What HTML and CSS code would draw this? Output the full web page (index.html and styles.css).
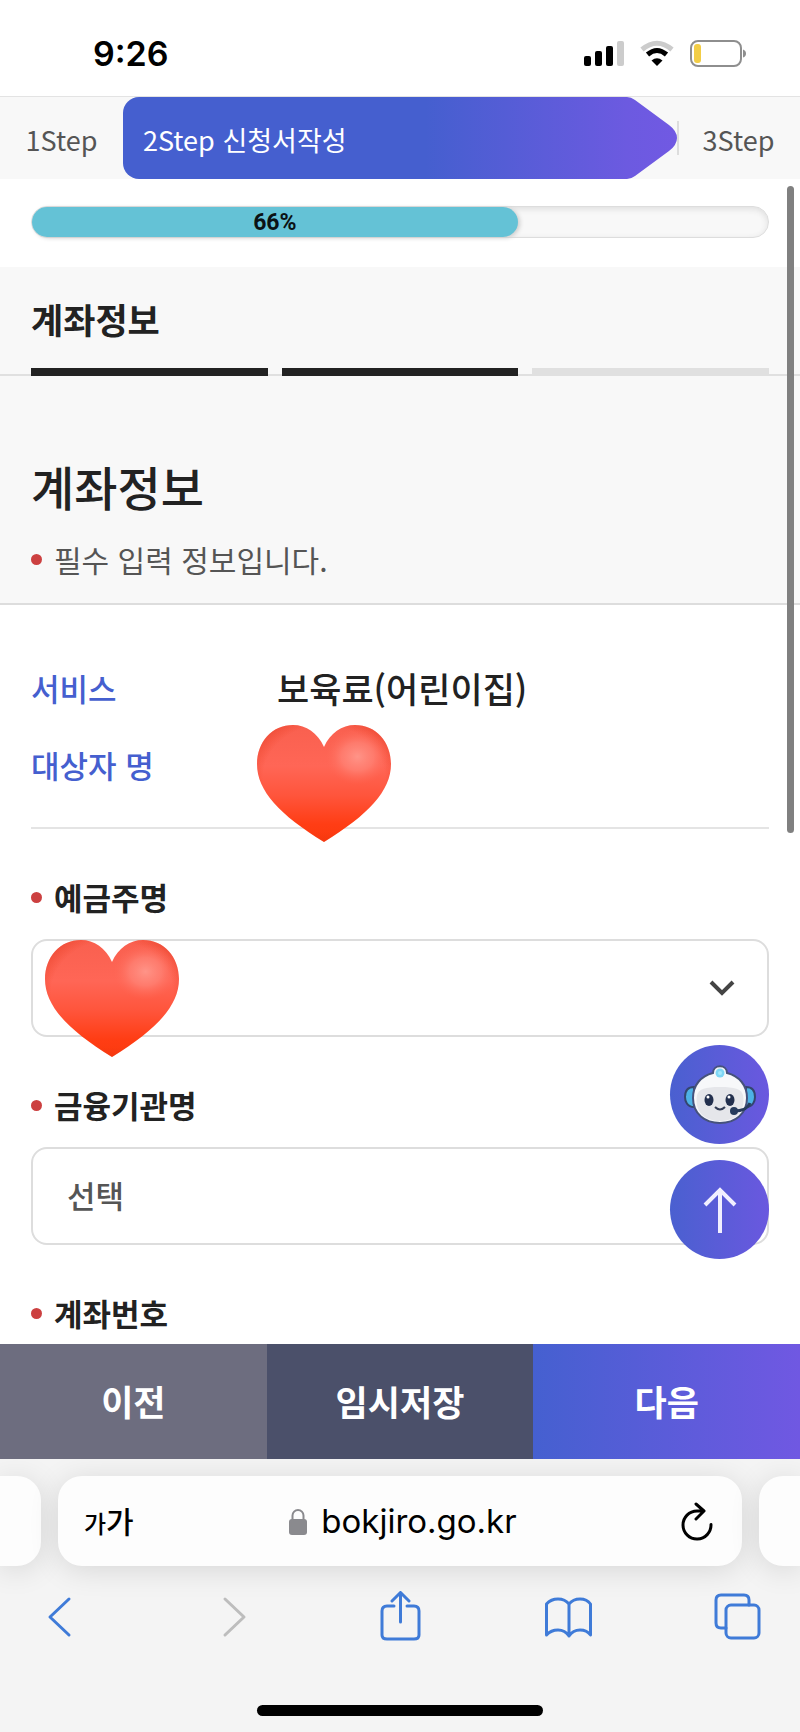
FILE: index.html
```html
<!DOCTYPE html>
<html lang="ko">
<head>
<meta charset="utf-8">
<meta name="viewport" content="width=device-width, initial-scale=1">
<title>계좌정보</title>
<link rel="stylesheet" href="styles.css">
</head>
<body>
<svg class="defs" width="0" height="0" aria-hidden="true">
  <defs>
    <linearGradient id="heart-base" x1="0" y1="0" x2="0" y2="1">
      <stop offset="0" stop-color="#f9604f"/><stop offset=".35" stop-color="#ff6656"/><stop offset=".6" stop-color="#ff553c"/><stop offset=".85" stop-color="#ff3d14"/><stop offset="1" stop-color="#fb3a0e"/>
    </linearGradient>
    <radialGradient id="heart-shine" cx=".75" cy=".27" r=".24">
      <stop offset="0" stop-color="#ff9488"/><stop offset=".5" stop-color="#ff8578" stop-opacity=".7"/><stop offset="1" stop-color="#ff6a58" stop-opacity="0"/>
    </radialGradient>
    <radialGradient id="heart-edge" cx=".5" cy=".46" r=".6">
      <stop offset=".76" stop-color="#e8300f" stop-opacity="0"/><stop offset="1" stop-color="#dd3319" stop-opacity=".5"/>
    </radialGradient>
    <symbol id="heart" viewBox="0 0 134 117">
      <path fill="url(#heart-base)" d="M67 22C61 8 49 0 36 0 15 0 0 17 0 39c0 27 23 51 67 78 44-27 67-51 67-78C134 17 119 0 98 0 85 0 73 8 67 22Z"/>
      <path fill="url(#heart-edge)" d="M67 22C61 8 49 0 36 0 15 0 0 17 0 39c0 27 23 51 67 78 44-27 67-51 67-78C134 17 119 0 98 0 85 0 73 8 67 22Z"/>
      <path fill="url(#heart-shine)" d="M67 22C61 8 49 0 36 0 15 0 0 17 0 39c0 27 23 51 67 78 44-27 67-51 67-78C134 17 119 0 98 0 85 0 73 8 67 22Z"/>
    </symbol>
  </defs>
</svg>

<header class="status">
  <time class="status-time">9:26</time>
  <div class="status-icons">
    <svg width="40" height="28" viewBox="0 0 40 28" aria-label="signal">
      <rect x="0" y="16" width="7" height="10" rx="2"/><rect x="11" y="11" width="7" height="15" rx="2"/><rect x="22" y="6" width="7" height="20" rx="2"/><rect x="33" y="1" width="7" height="25" rx="2" fill="#ccc"/>
    </svg>
    <svg width="34" height="28" viewBox="0 0 34 28" fill="none" aria-label="wifi">
      <path d="M2 9.500Q17-3 32 9.500" stroke="#ccc" stroke-width="5"/>
      <path d="M7.500 14.500Q17 6.500 26.500 14.500" stroke="#000" stroke-width="5"/>
      <path d="M17 26l-5.500-5.500q5.500-4.500 11 0z" fill="#000"/>
    </svg>
    <svg width="56" height="28" viewBox="0 0 56 28" fill="none" aria-label="battery">
      <rect x="1" y="1" width="50" height="25" rx="7" stroke="#8e8e8e" stroke-width="2"/>
      <rect x="4" y="4" width="7" height="19" rx="3" fill="#f2cd46"/>
      <path d="M53 9.500q3 1 3 4t-3 4z" fill="#8e8e8e"/>
    </svg>
  </div>
</header>

<nav class="steps">
  <span class="step">1Step</span>
  <span class="step-current" aria-current="step">
    <span class="step-body">2Step 신청서작성</span>
    <svg class="step-tip" width="50" height="82" viewBox="0 0 50 82" aria-hidden="true">
      <defs><linearGradient id="tip"><stop offset="0" stop-color="#6c5ae0"/><stop offset="1" stop-color="#7159e3"/></linearGradient></defs>
      <path fill="url(#tip)" d="M0 0q4 0 8 3l34 25q8 6 8 13t-8 13L8 79q-4 3-8 3z"/>
    </svg>
  </span>
  <span class="step step-next">3Step</span>
</nav>

<main class="page">
  <div class="progress-wrap">
    <div class="progress" role="progressbar" aria-valuenow="66" aria-valuemin="0" aria-valuemax="100">
      <div class="progress-fill" style="width:66%">66%</div>
    </div>
  </div>

  <section class="stage">
    <h2 class="stage-title">계좌정보</h2>
    <div class="stage-bars"><span class="bar done"></span><span class="bar done"></span><span class="bar"></span></div>
  </section>

  <section class="intro">
    <h1 class="intro-title">계좌정보</h1>
    <p class="intro-note required">필수 입력 정보입니다.</p>
  </section>

  <form class="form">
    <dl class="summary">
      <div class="summary-row"><dt>서비스</dt><dd>보육료(어린이집)</dd></div>
      <div class="summary-row"><dt>대상자 명</dt><dd class="masked"><svg class="heart heart-name" role="img" aria-label="❤"><use href="#heart"/></svg></dd></div>
    </dl>

    <div class="field">
      <label class="required" for="holder">예금주명</label>
      <div class="select-box">
        <select id="holder"><option></option></select>
        <svg class="chevron" width="26" height="16" viewBox="0 0 26 16" aria-hidden="true"><path d="M2 2l11 11L24 2" fill="none" stroke="#444" stroke-width="4"/></svg>
        <svg class="heart heart-field" role="img" aria-label="❤"><use href="#heart"/></svg>
      </div>
    </div>

    <div class="field">
      <label class="required" for="bank">금융기관명</label>
      <div class="select-box">
        <select id="bank"><option>선택</option></select>
        <div class="floating">
          <button class="fab" type="button" aria-label="챗봇">
            <svg width="72" height="60" viewBox="0 0 72 60" aria-hidden="true">
              <path d="M10 22C2 22 1 28 1 32s2 10 9 10zM62 22c8 0 9 6 9 10s-2 10-9 10z" fill="#4db2e6" stroke="#34466f" stroke-width="2"/>
              <path d="M29 8C29-1 43-1 43 8 55 11 63 20 63 33 63 49 51 58 36 58S9 49 9 33C9 20 17 11 29 8Z" fill="#f7f8fa" stroke="#46527c" stroke-width="2"/>
              <path d="M13 30c2-6 8-8 23-8s21 2 23 8c3 17-8 26-23 26S10 47 13 30Z" fill="#e5e6ea"/>
              <circle cx="36" cy="8" r="4.500" fill="#7fd6f5"/><circle cx="36" cy="8" r="2" fill="#a5e8fb"/>
              <ellipse cx="25" cy="35" rx="4.500" ry="6" fill="#222f4d"/><ellipse cx="46" cy="35" rx="4.500" ry="6" fill="#222f4d"/>
              <circle cx="24" cy="32" r="1.500" fill="#fff"/><circle cx="45" cy="32" r="1.500" fill="#fff"/>
              <path d="M31 42q5 5 10 0" fill="none" stroke="#333d55" stroke-width="2"/>
              <path d="M66 38q-3 8-16 8" fill="none" stroke="#263b5c" stroke-width="3"/><circle cx="50" cy="46" r="4" fill="#263b5c"/>
            </svg>
          </button>
          <button class="fab" type="button" aria-label="맨 위로">
            <svg width="34" height="46" viewBox="0 0 34 46" fill="none" stroke="#f1efff" stroke-width="4" aria-hidden="true"><path d="M17 46V3M2 18L17 3l15 15"/></svg>
          </button>
        </div>
      </div>
    </div>

    <div class="field field-last"><span class="required">계좌번호</span></div>
  </form>
  <div class="scrollbar" aria-hidden="true"></div>
</main>

<div class="actions">
  <button class="action prev" type="button">이전</button>
  <button class="action save" type="button">임시저장</button>
  <button class="action next" type="button">다음</button>
</div>

<footer class="browser">
  <div class="tabs">
    <div class="tab-edge tab-left"></div>
    <div class="address">
      <button class="text-size" type="button"><span class="small">가</span><span>가</span></button>
      <div class="host">
        <svg width="18" height="27" viewBox="0 0 18 27" aria-hidden="true"><path d="M3.500 12V7.500a5.500 5.500 0 0 1 11 0V12" fill="none" stroke="#8a8a8e" stroke-width="2"/><rect y="11" width="18" height="16" rx="3" fill="#8a8a8e"/></svg>
        <span>bokjiro.go.kr</span>
      </div>
      <button class="reload" type="button" aria-label="새로 고침">
        <svg width="32" height="40" viewBox="0 0 32 40" fill="none" stroke="#000" stroke-width="3" stroke-linecap="round" stroke-linejoin="round" aria-hidden="true"><path d="M22 10H16A14 14 0 1 0 30 23.500M15 3l8 7-8 8"/></svg>
      </button>
    </div>
    <div class="tab-edge tab-right"></div>
  </div>
  <nav class="toolbar">
    <button type="button" aria-label="뒤로"><svg width="48" height="52" viewBox="0 0 48 52"><path d="M34 8L15 26l19 18"/></svg></button>
    <button type="button" class="off" aria-label="앞으로" disabled><svg width="48" height="52" viewBox="0 0 48 52"><path d="M20 8l19 18-19 18"/></svg></button>
    <button type="button" aria-label="공유"><svg width="48" height="52" viewBox="0 0 48 52"><path d="M20 15H13q-5 0-5 5v24q0 4 5 4h27q5 0 5-4V20q0-5-5-5h-7M26.500 31V2M18 10l8.500-8.500L35 10"/></svg></button>
    <button type="button" aria-label="책갈피"><svg width="48" height="52" viewBox="0 0 48 52"><path d="M25 45V13Q21 8 14 8T2.500 13V44Q7 39 14 39t11 6q4-6 11-6t10.500 5V13Q43 8 36 8T25 13"/></svg></button>
    <button type="button" aria-label="탭"><svg width="48" height="52" viewBox="0 0 48 52"><path d="M13 37H8q-5 0-5-5V9q0-5 5-5h23q5 0 5 5v5"/><rect x="13" y="14" width="33" height="33" rx="5"/></svg></button>
  </nav>
  <div class="home-bar"></div>
</footer>
</body>
</html>
```
FILE: styles.css
```css
* { box-sizing: border-box; margin: 0; padding: 0; }

body {
  min-height: 100vh;
  display: flex;
  flex-direction: column;
  background: #fff;
  color: #222;
  font-family: "Noto Sans CJK KR", sans-serif;
  font-size: 30px;
  line-height: 44px;
}

button { border: 0; background: none; font: inherit; color: inherit; cursor: pointer; }
svg { display: block; }
.defs { position: absolute; }

/* status bar */
.status {
  height: 97px;
  padding: 12px 54px 0 93px;
  display: flex;
  align-items: center;
  justify-content: space-between;
  border-bottom: 1px solid #e3e3e3;
  color: #000;
}
.status-time { font: 600 34px/44px Inter, sans-serif; }
.status-icons { display: flex; gap: 16px; }

/* step navigation */
.steps {
  height: 82px;
  display: flex;
  background: #f8f8f8;
  color: #555;
  font-size: 27px;
}
.step { width: 123px; padding-top: 3px; display: flex; align-items: center; justify-content: center; }
.step-next { background: linear-gradient(#ddd, #ddd) left center / 2px 34px no-repeat; }
.step-current { flex: 1; display: flex; color: #fff; }
.step-body {
  flex: 1;
  display: flex;
  align-items: center;
  padding: 3px 0 0 20px;
  border-radius: 16px 0 0 16px;
  background: linear-gradient(90deg, #455fcf 60%, #6c5ae0);
}

/* page */
.page { position: relative; flex: 1; }
.progress-wrap { padding: 27px 31px 29px; }
.progress {
  height: 32px;
  border: 1px solid #ddd;
  border-radius: 16px;
  background: #f8f8f8;
  box-shadow: inset 0 2px 6px #ddd;
}
.progress-fill {
  height: 30px;
  border-radius: 15px;
  background: #64c2d6;
  box-shadow: 2px 1px 4px #ccc;
  color: #0b1214;
  text-align: center;
  font: 700 23px/32px Roboto, sans-serif;
}

.stage { padding: 28px 31px 0; background: #f8f8f8; border-bottom: 2px solid #e0e0e0; }
.stage-title { font-size: 35px; line-height: 48px; font-weight: 700; }
.stage-bars { display: grid; grid-template-columns: repeat(3, 1fr); gap: 14px; margin: 25px 0 -2px; }
.bar { height: 8px; background: #e0e0e0; }
.bar.done { background: #222; }

.intro { padding: 78px 31px 22px; background: #f8f8f8; border-bottom: 2px solid #ddd; }
.intro-title { font-size: 47px; line-height: 64px; font-weight: 500; }
.intro-note { margin-top: 19px; color: #555; }

.required { display: flex; align-items: center; gap: 12px; }
.required::before { content: ""; width: 11px; height: 11px; border-radius: 50%; background: #cc4040; }

.form { padding: 61px 31px 7px; }
.summary { padding-bottom: 40px; border-bottom: 2px solid #e4e4e4; }
.summary-row { display: grid; grid-template-columns: 1fr 2fr; align-items: center; height: 44px; }
.summary-row + .summary-row { margin-top: 33px; }
.summary dt { color: #455fcf; font-size: 31px; font-weight: 500; }
.summary dd { font-size: 35px; font-weight: 500; }
.masked { position: relative; height: 44px; }

.heart { position: absolute; width: 134px; height: 117px; }
.heart-name { left: -20px; top: -18px; }
.heart-field { left: 14px; top: 1px; }

.field { margin-top: 46px; font-size: 31px; font-weight: 700; }
.select-box { position: relative; margin-top: 20px; font-weight: 500; }
.select-box select {
  display: block;
  width: 100%;
  height: 98px;
  padding: 0 34px 2px;
  border: 2px solid #ddd;
  border-radius: 16px;
  appearance: none;
  background: #fff;
  color: #555;
  font: inherit;
}
.chevron { position: absolute; right: 34px; top: 41px; }

.floating { position: absolute; right: 0; top: -102px; display: grid; gap: 16px; }
.fab {
  width: 99px;
  height: 99px;
  display: grid;
  place-items: center;
  border-radius: 50%;
  background: linear-gradient(90deg, #4a60d0, #6a58df);
}

.scrollbar {
  position: absolute;
  right: 6px;
  top: 7px;
  width: 7px;
  height: 647px;
  border-radius: 4px;
  background: #808080;
}

/* bottom actions */
.actions { display: grid; grid-template-columns: repeat(3, 1fr); height: 115px; color: #fff; }
.action { padding-bottom: 2px; font-size: 35px; font-weight: 700; }
.prev { background: #6d6d7f; }
.save { background: #4b506a; }
.next { background: linear-gradient(90deg, #4560d0, #7058e2); }

/* browser chrome */
.browser { height: 273px; overflow: hidden; background: #f4f4f4; }
.tabs { display: flex; gap: 17px; padding-top: 17px; }
.tab-edge, .address { height: 90px; background: #fdfdfd; box-shadow: 0 4px 30px rgba(0, 0, 0, .12); }
.tab-edge { width: 41px; }
.tab-left { border-radius: 0 24px 24px 0; }
.tab-right { border-radius: 24px 0 0 24px; }
.address {
  flex: 1;
  display: grid;
  grid-template-columns: 1fr auto 1fr;
  align-items: center;
  padding: 0 29px 0 26px;
  border-radius: 24px;
  color: #000;
}
.text-size { justify-self: start; font-weight: 500; }
.text-size .small { font-size: 24px; }
.host { display: flex; align-items: center; gap: 14px; padding-left: 9px; font: 400 33px/44px Inter, sans-serif; }
.reload { justify-self: end; }
.toolbar { display: flex; justify-content: space-between; padding: 25px 39px 0 35px; }
.toolbar svg {
  fill: none;
  stroke: #3f7bd8;
  stroke-width: 3;
  stroke-linecap: round;
  stroke-linejoin: round;
}
.toolbar .off svg { stroke: #bdbdbd; }
.home-bar { width: 286px; height: 11px; margin: 62px auto 0; border-radius: 6px; background: #000; }
```
